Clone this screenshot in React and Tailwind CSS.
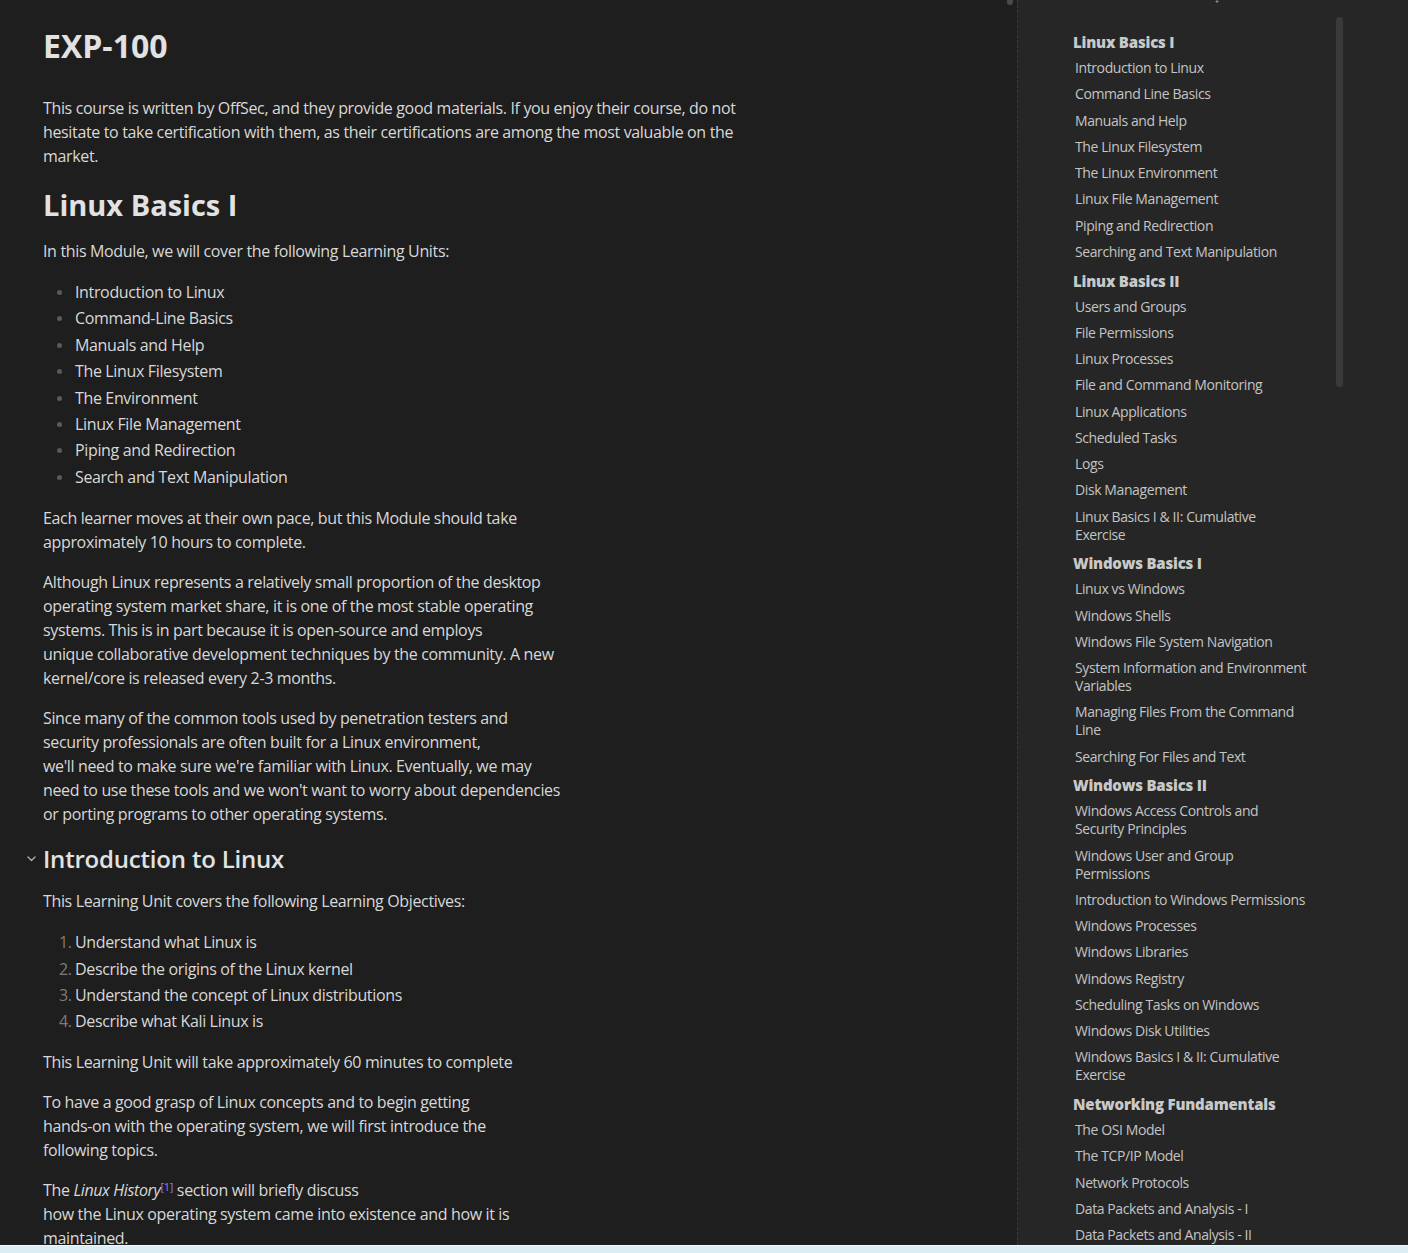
import React from "react";

const FONT = { fontFamily: '"Open Sans", "Noto Sans", sans-serif' };

const toc = [
  { h: "Linux Basics I", items: [["Introduction to Linux"], ["Command Line Basics"], ["Manuals and Help"], ["The Linux Filesystem"], ["The Linux Environment"], ["Linux File Management"], ["Piping and Redirection"], ["Searching and Text Manipulation"]] },
  { h: "Linux Basics II", items: [["Users and Groups"], ["File Permissions"], ["Linux Processes"], ["File and Command Monitoring"], ["Linux Applications"], ["Scheduled Tasks"], ["Logs"], ["Disk Management"], ["Linux Basics I & II: Cumulative", "Exercise"]] },
  { h: "Windows Basics I", items: [["Linux vs Windows"], ["Windows Shells"], ["Windows File System Navigation"], ["System Information and Environment", "Variables"], ["Managing Files From the Command", "Line"], ["Searching For Files and Text"]] },
  { h: "Windows Basics II", items: [["Windows Access Controls and", "Security Principles"], ["Windows User and Group", "Permissions"], ["Introduction to Windows Permissions"], ["Windows Processes"], ["Windows Libraries"], ["Windows Registry"], ["Scheduling Tasks on Windows"], ["Windows Disk Utilities"], ["Windows Basics I & II: Cumulative", "Exercise"]] },
  { h: "Networking Fundamentals", items: [["The OSI Model"], ["The TCP/IP Model"], ["Network Protocols"], ["Data Packets and Analysis - I"], ["Data Packets and Analysis - II"]] },
];

const bullets = ["Introduction to Linux", "Command-Line Basics", "Manuals and Help", "The Linux Filesystem", "The Environment", "Linux File Management", "Piping and Redirection", "Search and Text Manipulation"];
const objectives = ["Understand what Linux is", "Describe the origins of the Linux kernel", "Understand the concept of Linux distributions", "Describe what Kali Linux is"];

function Lines({ lines }) {
  return lines.map((l, i) => (
    <React.Fragment key={i}>
      {l}
      {i < lines.length - 1 && <br />}
    </React.Fragment>
  ));
}

function P({ lines, className = "" }) {
  return (
    <p className={"whitespace-nowrap text-[16px] leading-[24px] tracking-[-0.35px] text-[#d8d8d8] " + className}>
      <Lines lines={lines} />
    </p>
  );
}

export default function App() {
  return (
    <div className="flex h-[1253px] w-[1408px] flex-col overflow-hidden bg-[#1e1e1e]" style={FONT}>
      <div className="flex min-h-0 flex-1">
        {/* Main */}
        <main className="relative h-full w-[1017px] overflow-hidden bg-[#1e1e1e] pl-[43px] pt-[27px]">
          <div className="absolute right-[4px] top-0 h-[5px] w-[6px] rounded-b-[3px] bg-[#4a4a4a]" />
          <h1 className="text-[32px] font-bold leading-[38px] text-[#e2e2e2]">EXP-100</h1>
          <P
            className="mt-[31px]"
            lines={[
              "This course is written by OffSec, and they provide good materials. If you enjoy their course, do not",
              "hesitate to take certification with them, as their certifications are among the most valuable on the",
              "market.",
            ]}
          />
          <h2 className="mt-[19px] text-[29px] font-bold leading-[36px] text-[#e2e2e2]">Linux Basics I</h2>
          <P className="mt-[16px]" lines={["In this Module, we will cover the following Learning Units:"]} />
          <ul className="mt-[16px] pl-[32px]">
            {bullets.map((b) => (
              <li key={b} className="relative text-[16px] leading-[26.4px] tracking-[-0.35px] text-[#d8d8d8]">
                <span className="absolute left-[-18px] top-[11px] h-[5px] w-[5px] rounded-full bg-[#5a5a5a]" />
                {b}
              </li>
            ))}
          </ul>
          <P className="mt-[16px]" lines={["Each learner moves at their own pace, but this Module should take", "approximately 10 hours to complete."]} />
          <P
            className="mt-[16px]"
            lines={[
              "Although Linux represents a relatively small proportion of the desktop",
              "operating system market share, it is one of the most stable operating",
              "systems. This is in part because it is open-source and employs",
              "unique collaborative development techniques by the community. A new",
              "kernel/core is released every 2-3 months.",
            ]}
          />
          <P
            className="mt-[16px]"
            lines={[
              "Since many of the common tools used by penetration testers and",
              "security professionals are often built for a Linux environment,",
              "we'll need to make sure we're familiar with Linux. Eventually, we may",
              "need to use these tools and we won't want to worry about dependencies",
              "or porting programs to other operating systems.",
            ]}
          />
          <h3 className="relative mt-[16px] text-[24px] font-semibold leading-[34px] tracking-[-0.2px] text-[#e2e2e2]">
            <svg className="absolute left-[-16px] top-[14px]" width="9" height="6" viewBox="0 0 9 6" fill="none">
              <path d="M1 1l3.5 3.5L8 1" stroke="#b0b0b0" strokeWidth="1.4" strokeLinecap="round" strokeLinejoin="round" />
            </svg>
            Introduction to Linux
          </h3>
          <P className="mt-[13px]" lines={["This Learning Unit covers the following Learning Objectives:"]} />
          <ol className="mt-[16px] pl-[32px]">
            {objectives.map((o, i) => (
              <li key={o} className="relative text-[16px] leading-[26.3px] tracking-[-0.35px] text-[#d8d8d8]">
                <span className="absolute left-[-16px] top-0 text-[#7c7c7c]">{i + 1}.</span>
                {o}
              </li>
            ))}
          </ol>
          <P className="mt-[16px]" lines={["This Learning Unit will take approximately 60 minutes to complete"]} />
          <P
            className="mt-[16px]"
            lines={[
              "To have a good grasp of Linux concepts and to begin getting",
              "hands-on with the operating system, we will first introduce the",
              "following topics.",
            ]}
          />
          <p className="mt-[16px] whitespace-nowrap text-[16px] leading-[24px] tracking-[-0.35px] text-[#d8d8d8]">
            The <em>Linux History</em>
            <sup className="text-[11px] text-[#8f7cff]">[1]</sup> section will briefly discuss
            <br />
            how the Linux operating system came into existence and how it is
            <br />
            maintained.
          </p>
        </main>

        {/* Sidebar */}
        <aside className="relative h-full flex-1 border-l border-dashed border-[#3a3a3a] bg-[#262626] pl-[55px] pt-[29px]">
          <svg className="absolute left-[195px] top-0" width="8" height="4" viewBox="0 0 8 4">
            <path d="M4 0v3M2.5 1.5h3" stroke="#8a8a8a" strokeWidth="1" />
          </svg>
          <div className="absolute left-[318px] top-[17px] h-[370px] w-[7px] rounded-full bg-[#3a3a3a]" />
          {toc.map((sec, si) => (
            <div key={sec.h} className={si === 0 ? "" : "mt-[2.5px]"}>
              <div className="whitespace-nowrap pt-[4px] pb-[4px] text-[15px] font-extrabold leading-[18px] tracking-[-0.2px] text-[#c9c9c9]">{sec.h}</div>
              {sec.items.map((it) => (
                <div key={it.join()} className="whitespace-nowrap pl-[2px] pt-[4px] pb-[4.25px] text-[14px] leading-[18px] tracking-[-0.4px] text-[#c4c4c4]">
                  <Lines lines={it} />
                </div>
              ))}
            </div>
          ))}
        </aside>
      </div>
      <div className="h-[8px] border-t border-[#f4f9fb] bg-[#dcedf3]" />
    </div>
  );
}
